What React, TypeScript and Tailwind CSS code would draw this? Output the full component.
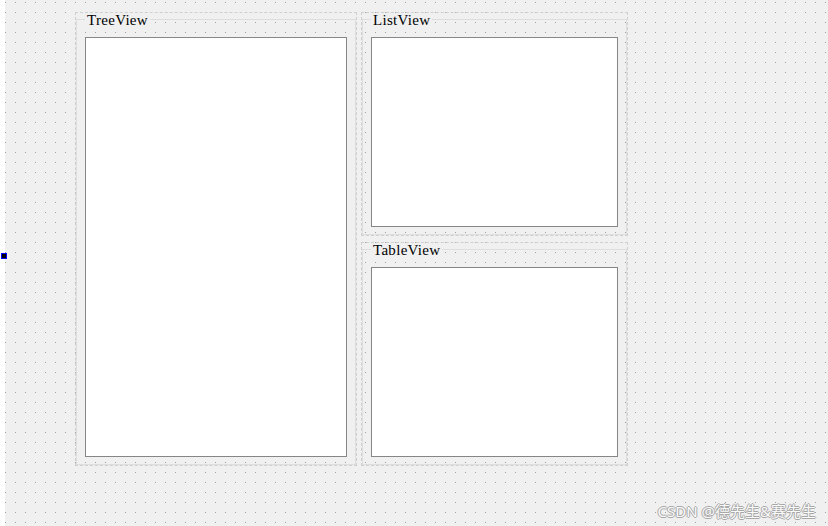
import React from "react";

function GroupBox({
  title,
  className,
}: {
  title: string;
  className: string;
}) {
  return (
    <div className={`border border-dashed border-[#cfcfcf] pt-[6px] flex ${className}`}>
      <div className="relative flex-1 flex border border-[#dedede] pl-[8px] pr-[8px] pt-[17px] pb-[7px]">
        <span
          className="absolute -top-[7px] left-[8px] px-[2px] bg-[#f0f0f0] text-[15px] leading-[15px] tracking-[0.3px] text-black"
          style={{ fontFamily: '"Liberation Serif", serif' }}
        >
          {title}
        </span>
        <div className="flex-1 bg-white border border-[#868686]" />
      </div>
    </div>
  );
}

export default function App() {
  return (
    <div className="flex w-[828px] h-[526px] bg-white overflow-hidden">
      <div className="w-[5px] shrink-0 bg-white" />
      <div className="relative flex-1 bg-[#f0f0f0]">
        <svg className="absolute inset-0 w-full h-full" aria-hidden="true">
          <defs>
            <pattern id="grid" x="0" y="2" width="10" height="10" patternUnits="userSpaceOnUse">
              <rect x="0" y="0" width="1" height="1" fill="#a2a2a2" />
            </pattern>
          </defs>
          <rect width="100%" height="100%" fill="url(#grid)" />
        </svg>
        <div className="relative flex gap-[4px] pl-[70px] pt-[12px]">
          <GroupBox title="TreeView" className="w-[282px] h-[454px]" />
          <div className="flex flex-col gap-[6px] w-[267px]">
            <GroupBox title="ListView" className="h-[224px]" />
            <GroupBox title="TableView" className="h-[224px]" />
          </div>
        </div>
        <div
          className="absolute right-[12px] bottom-[6px] text-[15px] leading-[18px] text-[#fafafa] [text-shadow:1px_0_0_#a8a8a8,-1px_0_0_#a8a8a8,0_1px_0_#a8a8a8,0_-1px_0_#a8a8a8]"
          style={{ fontFamily: '"Noto Sans", "Noto Sans CJK SC", sans-serif' }}
        >
          CSDN @德先生&amp;赛先生
        </div>
      </div>
      <div className="absolute left-[1px] top-[253px] w-[6px] h-[6px] border border-[#0000ff] bg-black" />
    </div>
  );
}
